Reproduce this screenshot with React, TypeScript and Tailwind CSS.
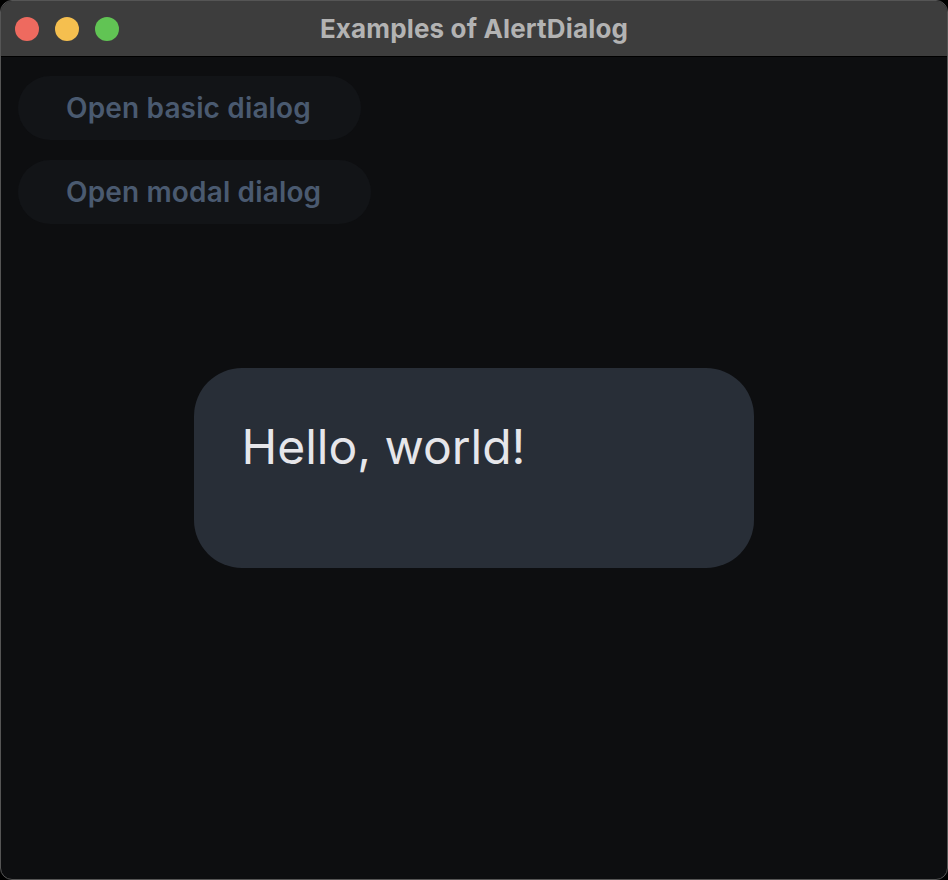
import React from "react";

const font = { fontFamily: "Inter, 'Noto Sans', sans-serif" };

const TrafficLights = () => (
  <div className="flex items-center gap-[16px] pl-[14px]">
    <span className="w-[24px] h-[24px] rounded-full bg-[#ee6a5f]" />
    <span className="w-[24px] h-[24px] rounded-full bg-[#f5bf4f]" />
    <span className="w-[24px] h-[24px] rounded-full bg-[#61c454]" />
  </div>
);

const PillButton = ({ label }: { label: string }) => (
  <button className="self-start h-[64px] pl-[48px] pr-[50px] rounded-full bg-[#121417] text-[#4a5a70] text-[28px] font-semibold tracking-[0.15px]">
    {label}
  </button>
);

export default function App() {
  return (
    <div className="w-[948px] h-[880px] bg-black" style={font}>
      <div className="w-full h-full flex flex-col rounded-[12px] border border-[#555] overflow-hidden bg-[#0d0e10]">
        <div className="relative h-[56px] shrink-0 flex items-center bg-[#3d3d3d] border-b border-black">
          <TrafficLights />
          <div className="absolute inset-0 flex items-center justify-center text-[26px] font-bold tracking-[0.15px] text-[#b3b3b3]">
            Examples of AlertDialog
          </div>
        </div>
        <div className="relative flex-1 flex flex-col gap-[20px] px-[17px] pt-[19px]">
          <PillButton label="Open basic dialog" />
          <PillButton label="Open modal dialog" />
          <div className="absolute inset-0 flex items-center justify-center pr-[1px]">
            <div className="w-[560px] h-[200px] rounded-[48px] bg-[#282e37] pl-[48px] pt-[50px]">
              <p className="text-[48px] leading-[1.2] text-[#e6e6ea]">Hello, world!</p>
            </div>
          </div>
        </div>
      </div>
    </div>
  );
}
